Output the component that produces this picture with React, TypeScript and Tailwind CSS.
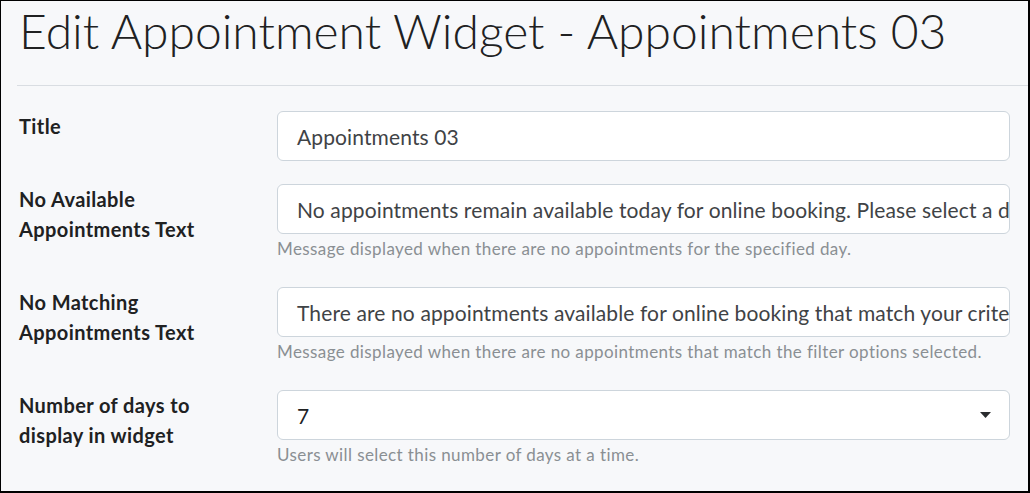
const fields = [
  {
    label: ['Title'],
    value: 'Appointments 03',
  },
  {
    label: ['No Available', 'Appointments Text'],
    value:
      'No appointments remain available today for online booking. Please select a different day.',
    help: 'Message displayed when there are no appointments for the specified day.',
  },
  {
    label: ['No Matching', 'Appointments Text'],
    value:
      'There are no appointments available for online booking that match your criteria.',
    help: 'Message displayed when there are no appointments that match the filter options selected.',
  },
]

function Label({ lines }: { lines: string[] }) {
  return (
    <div className="text-[20px] leading-[30px] tracking-[0.4px] font-bold text-[#202122]">
      {lines.map((l) => (
        <div key={l}>{l}</div>
      ))}
    </div>
  )
}

function Help({ children }: { children: string }) {
  return (
    <div className="mt-[4px] text-[17px] leading-[22px] tracking-[0.4px] text-[#8a8f93] whitespace-nowrap">
      {children}
    </div>
  )
}

export default function App() {
  return (
    <div
      className="w-[1030px] h-[493px] overflow-hidden bg-[#f7f8fa] border-l border-t border-r-2 border-b-2 border-black text-[#202122]"
      style={{ fontFamily: 'Lato, "Open Sans", sans-serif' }}
    >
      <h1 className="pl-[18px] pt-[1px] h-[84px] text-[48px] leading-[58px] font-light text-[#202122] whitespace-nowrap">
        Edit Appointment Widget - Appointments 03
      </h1>
      <div className="ml-[16px] border-t border-[#d9dde2]" />

      <div className="pl-[18px] pr-[18px] pt-[25px]">
        {fields.map((f) => (
          <div
            key={f.value}
            className={`grid grid-cols-[258px_minmax(0,1fr)] ${f.help ? 'mb-[27px]' : 'mb-[23px]'}`}
          >
            <Label lines={f.label} />
            <div className="min-w-0">
              <div className="h-[50px] flex items-center pt-[2px] bg-white border border-[#cdd5dc] rounded-[6px] pl-[19px] pr-[3px] overflow-hidden whitespace-nowrap text-[21px] tracking-[0.12px] text-[#3f4346]">
                {f.value}
              </div>
              {f.help && <Help>{f.help}</Help>}
            </div>
          </div>
        ))}

        <div className="grid grid-cols-[258px_minmax(0,1fr)]">
          <Label lines={['Number of days to', 'display in widget']} />
          <div className="min-w-0">
            <div className="h-[50px] flex items-center justify-between pt-[2px] bg-white border border-[#cdd5dc] rounded-[6px] pl-[19px] pr-[18px] text-[21px] text-[#202122]">
              <span>7</span>
              <svg width="11" height="6" viewBox="0 0 11 6" className="-mt-[2px]">
                <path d="M0 0h11L5.5 6z" fill="#2a2c2e" />
              </svg>
            </div>
            <Help>Users will select this number of days at a time.</Help>
          </div>
        </div>
      </div>
    </div>
  )
}
